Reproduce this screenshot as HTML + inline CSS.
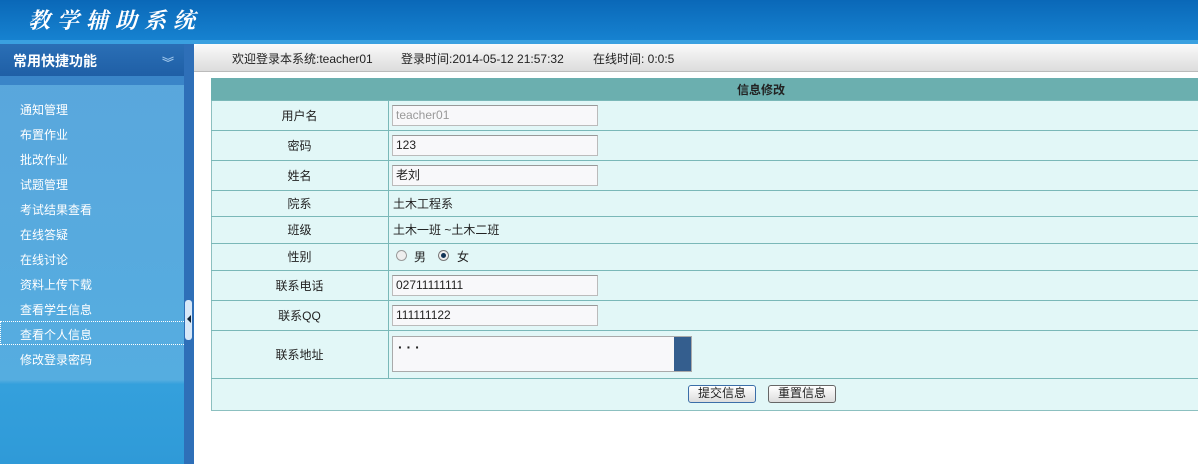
<!DOCTYPE html>
<html><head><meta charset="utf-8"><style>
*{margin:0;padding:0;box-sizing:border-box}
body{width:1198px;height:464px;overflow:hidden;background:#fff;font-family:"Liberation Sans","Noto Sans CJK SC",sans-serif;font-size:12px;color:#222;position:relative}
.a{position:absolute}
#hd{left:0;top:0;width:1198px;height:40px;background:linear-gradient(#0a68b8,#1682d0)}
#hd2{left:0;top:40px;width:1198px;height:4px;background:#3aa0e0}
#logo{left:28px;top:4px;color:#fff;font-size:22px;font-weight:bold;letter-spacing:7px;font-family:"Noto Serif CJK SC",serif;font-style:italic}
#sb{left:0;top:44px;width:184px;height:420px;background:linear-gradient(#5aa6dc 0,#55ade0 80%,#34a0dc 81%,#2f9ad8 100%)}
#st{left:0;top:44px;width:184px;height:32px;background:linear-gradient(#2a6fb6,#1f5fa6);color:#fff;font-weight:bold;font-size:14px;padding:7px 0 0 13px}
#gap{left:0;top:76px;width:184px;height:9px;background:#3a85c8}
.m{left:20px;color:#fff;font-size:12px}
#sel{left:0;top:321px;width:184px;height:24px;border-top:1px dotted #fff;border-bottom:1px dotted #fff;border-left:1px dotted #fff}
#spl{left:184px;top:44px;width:10px;height:420px;background:#2e6fb8}
#hnd{left:185px;top:300px;width:7px;height:40px;background:#d8e8f8;border-radius:3px}
#tb{left:194px;top:44px;width:1004px;height:28px;background:linear-gradient(#fafafa,#dcdcdc);border-bottom:1px solid #bbb;border-radius:6px 0 0 0}
#tbl{left:211px;top:78px;width:990px;height:333px;background:#e2f7f7;border:1px solid #8cc0c0}
#th{left:211px;top:78px;width:990px;height:22px;background:#6bafaf;color:#222;font-weight:bold;text-align:center;padding-top:3px;padding-left:110px}
.hl{left:211px;width:990px;height:1px;background:#7ab8b8}
.vl{left:388px;top:100px;width:1px;height:278px;background:#7ab8b8}
.lb{left:211px;width:177px;text-align:center;font-size:12px}
.in{left:392px;width:206px;height:21px;background:#f8f8fa;border:1px solid #bbb;border-top-color:#999;padding:2px 3px;font-size:12px;line-height:15px}
.tx{left:393px;font-size:12px}
.btn{height:18px;top:385px;border:1px solid #666;border-radius:3px;background:linear-gradient(#fff,#ddd);text-align:center;font-size:12px;line-height:15px}
</style></head><body>
<div class="a" id="hd"></div><div class="a" id="hd2"></div>
<div class="a" id="logo">教学辅助系统</div>
<div class="a" id="sb"></div>
<div class="a" id="st">常用快捷功能<span style="position:absolute;left:162px;top:10px;color:#9cc4ea;font-size:12px">︾</span></div>
<div class="a" id="gap"></div>
<div class="a m" style="top:101px">通知管理</div>
<div class="a m" style="top:126px">布置作业</div>
<div class="a m" style="top:151px">批改作业</div>
<div class="a m" style="top:176px">试题管理</div>
<div class="a m" style="top:201px">考试结果查看</div>
<div class="a m" style="top:226px">在线答疑</div>
<div class="a m" style="top:251px">在线讨论</div>
<div class="a m" style="top:276px">资料上传下载</div>
<div class="a m" style="top:301px">查看学生信息</div>
<div class="a" id="sel"></div>
<div class="a m" style="top:326px">查看个人信息</div>
<div class="a m" style="top:351px">修改登录密码</div>
<div class="a" id="spl"></div><div class="a" id="hnd"></div>
<div class="a" style="left:187px;top:315px;width:0;height:0;border-top:4px solid transparent;border-bottom:4px solid transparent;border-right:4px solid #123"></div>
<div class="a" id="tb"></div>
<div class="a" style="left:232px;top:50px">欢迎登录本系统:teacher01</div>
<div class="a" style="left:401px;top:50px">登录时间:2014-05-12 21:57:32</div>
<div class="a" style="left:593px;top:50px">在线时间: 0:0:5</div>
<div class="a" id="tbl"></div>
<div class="a" id="th">信息修改</div>
<div class="a hl" style="top:100px"></div>
<div class="a hl" style="top:130px"></div>
<div class="a hl" style="top:160px"></div>
<div class="a hl" style="top:190px"></div>
<div class="a hl" style="top:216px"></div>
<div class="a hl" style="top:243px"></div>
<div class="a hl" style="top:270px"></div>
<div class="a hl" style="top:300px"></div>
<div class="a hl" style="top:330px"></div>
<div class="a hl" style="top:378px"></div>
<div class="a vl"></div>
<div class="a lb" style="top:107px">用户名</div>
<div class="a lb" style="top:137px">密码</div>
<div class="a lb" style="top:167px">姓名</div>
<div class="a lb" style="top:195px">院系</div>
<div class="a lb" style="top:221px">班级</div>
<div class="a lb" style="top:248px">性别</div>
<div class="a lb" style="top:277px">联系电话</div>
<div class="a lb" style="top:307px">联系QQ</div>
<div class="a lb" style="top:346px">联系地址</div>
<div class="a in" style="top:105px;color:#999">teacher01</div>
<div class="a in" style="top:135px">123</div>
<div class="a in" style="top:165px">老刘</div>
<div class="a tx" style="top:195px">土木工程系</div>
<div class="a tx" style="top:221px">土木一班 ~土木二班</div>
<div class="a" style="left:396px;top:250px;width:11px;height:11px;border-radius:50%;border:1px solid #999;background:#eee"></div>
<div class="a tx" style="left:414px;top:248px">男</div>
<div class="a" style="left:438px;top:250px;width:11px;height:11px;border-radius:50%;border:1px solid #777;background:#eee"><div style="margin:2px;width:5px;height:5px;border-radius:50%;background:#135"></div></div>
<div class="a tx" style="left:457px;top:248px">女</div>
<div class="a in" style="top:275px">02711111111</div>
<div class="a in" style="top:305px">111111122</div>
<div class="a" style="left:392px;top:336px;width:300px;height:36px;background:#f8f8fa;border:1px solid #aaa;padding:2px 5px;font-size:14px;font-weight:bold">· · ·</div>
<div class="a" style="left:674px;top:337px;width:17px;height:34px;background:#345e8e"></div>
<div class="a btn" style="left:688px;width:68px;border-color:#3b6ea8">提交信息</div>
<div class="a btn" style="left:768px;width:68px">重置信息</div>
</body></html>
